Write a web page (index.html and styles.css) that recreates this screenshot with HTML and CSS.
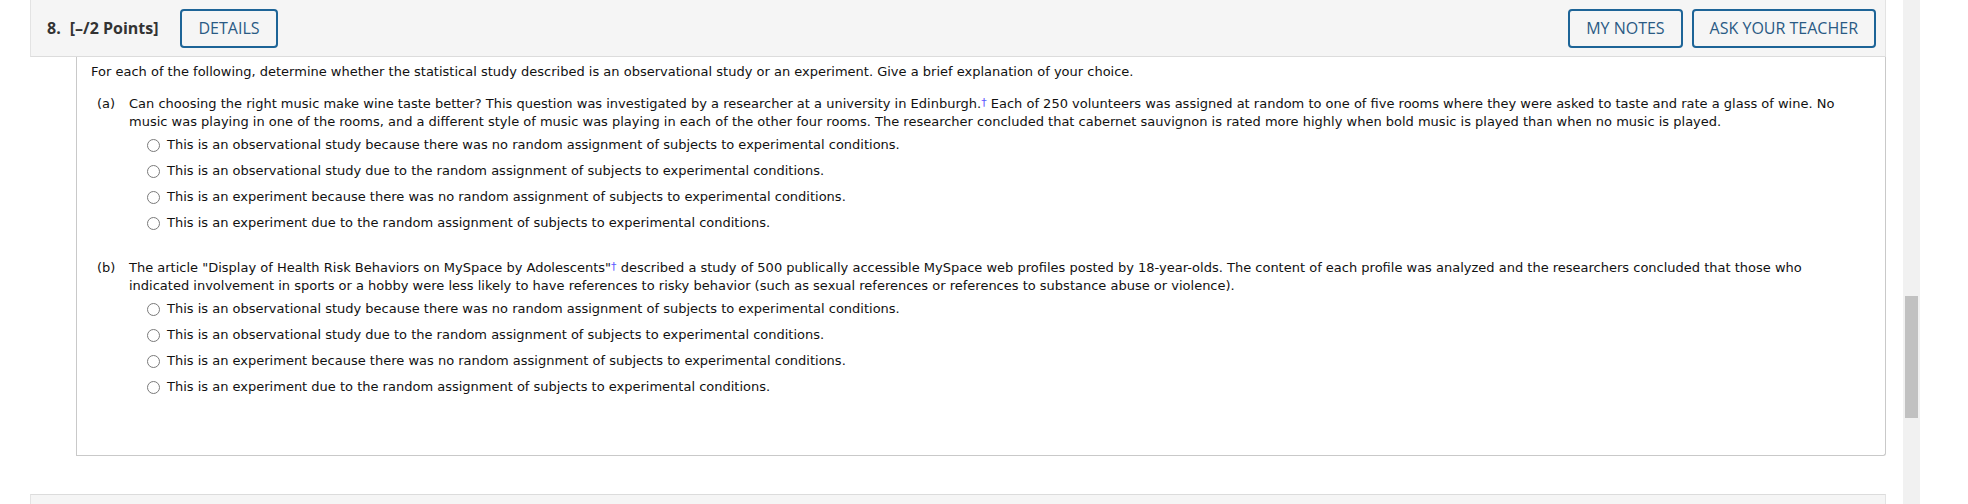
FILE: index.html
```html
<!DOCTYPE html>
<html>
<head>
<meta charset="utf-8">
<link rel="stylesheet" href="styles.css">
</head>
<body>
<div class="viewport">
  <div class="main">
    <div class="qhead">
      <div class="qtitle"><span class="qnum">8.</span><span>[–/2 Points]</span></div>
      <button class="btn">DETAILS</button>
      <div class="spacer"></div>
      <button class="btn">MY NOTES</button>
      <button class="btn">ASK YOUR TEACHER</button>
    </div>
    <div class="qbody">
      <p class="intro">For each of the following, determine whether the statistical study described is an observational study or an experiment. Give a brief explanation of your choice.</p>
      <div class="part">
        <div class="plabel">(a)</div>
        <div class="pcontent">
          <p class="ptext">Can choosing the right music make wine taste better? This question was investigated by a researcher at a university in Edinburgh.<span class="dag">†</span> Each of 250 volunteers was assigned at random to one of five rooms where they were asked to taste and rate a glass of wine. No music was playing in one of the rooms, and a different style of music was playing in each of the other four rooms. The researcher concluded that cabernet sauvignon is rated more highly when bold music is played than when no music is played.</p>
          <ul class="opts">
            <li><span class="radio"></span>This is an observational study because there was no random assignment of subjects to experimental conditions.</li>
            <li><span class="radio"></span>This is an observational study due to the random assignment of subjects to experimental conditions.</li>
            <li><span class="radio"></span>This is an experiment because there was no random assignment of subjects to experimental conditions.</li>
            <li><span class="radio"></span>This is an experiment due to the random assignment of subjects to experimental conditions.</li>
          </ul>
        </div>
      </div>
      <div class="part partb">
        <div class="plabel">(b)</div>
        <div class="pcontent">
          <p class="ptext">The article "Display of Health Risk Behaviors on MySpace by Adolescents"<span class="dag">†</span> described a study of 500 publically accessible MySpace web profiles posted by 18-year-olds. The content of each profile was analyzed and the researchers concluded that those who indicated involvement in sports or a hobby were less likely to have references to risky behavior (such as sexual references or references to substance abuse or violence).</p>
          <ul class="opts">
            <li><span class="radio"></span>This is an observational study because there was no random assignment of subjects to experimental conditions.</li>
            <li><span class="radio"></span>This is an observational study due to the random assignment of subjects to experimental conditions.</li>
            <li><span class="radio"></span>This is an experiment because there was no random assignment of subjects to experimental conditions.</li>
            <li><span class="radio"></span>This is an experiment due to the random assignment of subjects to experimental conditions.</li>
          </ul>
        </div>
      </div>
    </div>
    <div class="nexthead"></div>
  </div>
  <div class="scrollbar"><div class="thumb"></div></div>
</div>
</body>
</html>
```
FILE: styles.css
```css
html, body {
  margin: 0;
  padding: 0;
  background: #fff;
  height: 504px;
  overflow: hidden;
}
.viewport {
  display: flex;
  height: 504px;
}
.main {
  width: 1856px;
  padding-left: 30px;
  padding-right: 17px;
  display: flex;
  flex-direction: column;
  flex: none;
}
.main > * { flex: none; }
.qhead {
  display: flex;
  align-items: center;
  height: 56px;
  background: #f5f5f5;
  border-left: 1px solid #e3e3e3;
  border-right: 1px solid #e3e3e3;
  border-bottom: 1px solid #dcdcdc;
  padding: 0 9px 0 16px;
  gap: 9px;
  box-sizing: content-box;
}
.qtitle {
  font-family: "Open Sans", sans-serif;
  font-weight: 700;
  font-size: 16px;
  color: #333;
  margin-right: 13px;
  display: flex;
  gap: 9px;
}
.spacer { flex: 1; }
.btn {
  font-family: "Open Sans", sans-serif;
  font-size: 16px;
  color: #2a5a84;
  background: #f5f5f5;
  border: 2px solid #1d6497;
  border-radius: 4px;
  height: 39px;
  padding: 0 16px;
  line-height: 1;
}
.qbody {
  margin-left: 46px;
  height: 399px;
  box-sizing: border-box;
  border-left: 1px solid #c9c9c9;
  border-right: 1px solid #c9c9c9;
  border-bottom: 1px solid #c9c9c9;
  border-radius: 0 0 3px 0;
  padding: 6px 14px 0 14px;
  font-family: "DejaVu Sans", Verdana, sans-serif;
  font-size: 13px;
  line-height: 18px;
  color: #111;
}
.intro { margin: 0 0 14px 0; }
.part { display: flex; }
.partb { margin-top: 23px; }
.plabel { width: 38px; padding-left: 6px; box-sizing: border-box; flex: none; }
.pcontent { flex: 1; padding-right: 15px; }
.ptext { margin: 0; }
.dag { color: #5a5aff; font-size: 11px; line-height: 1; vertical-align: 2px; }
.opts {
  list-style: none;
  margin: 1px 0 0 0;
  padding: 0 0 0 18px;
}
.opts li {
  display: flex;
  align-items: center;
  height: 26px;
}
.radio {
  width: 11px;
  height: 11px;
  border: 1px solid #7a7a7a;
  border-radius: 50%;
  margin-right: 7px;
  flex: none;
  background: #fff;
}
.nexthead {
  margin-top: 38px;
  height: 20px;
  background: #f5f5f5;
  border-top: 1px solid #dcdcdc;
  border-left: 1px solid #e3e3e3;
  border-right: 1px solid #e3e3e3;
}
.scrollbar {
  width: 17px;
  height: 504px;
  background: #f1f1f1;
  position: relative;
  flex: none;
}
.thumb {
  position: absolute;
  left: 2px;
  top: 296px;
  width: 13px;
  height: 122px;
  background: #c1c1c1;
}
```
